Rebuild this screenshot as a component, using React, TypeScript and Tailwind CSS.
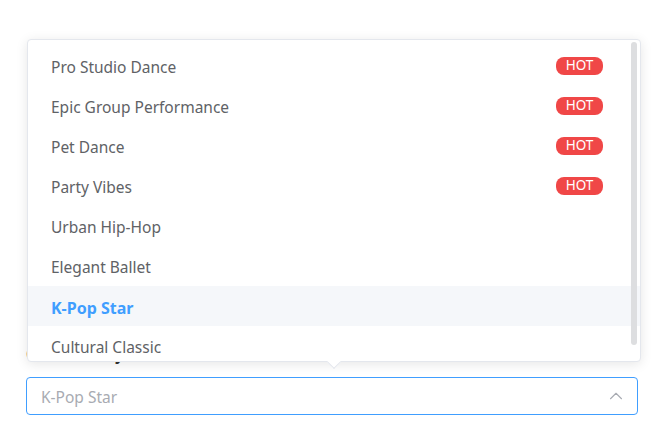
import { ChevronUp } from "lucide-react";

const OPTIONS = [
  { label: "Pro Studio Dance", hot: true },
  { label: "Epic Group Performance", hot: true },
  { label: "Pet Dance", hot: true },
  { label: "Party Vibes", hot: true },
  { label: "Urban Hip-Hop", hot: false },
  { label: "Elegant Ballet", hot: false },
  { label: "K-Pop Star", hot: false },
  { label: "Cultural Classic", hot: false },
  { label: "Street Freestyle", hot: false },
];

const SELECTED = "K-Pop Star";

export default function App() {
  return (
    <div
      className="relative w-[664px] h-[430px] bg-white overflow-hidden"
      style={{ fontFamily: '"Noto Sans", "Open Sans", sans-serif' }}
    >
      {/* form item, label sits under the popper */}
      <div className="flex flex-col pt-[343px] pl-[26px] pr-[26px]">
        <div className="h-[34px] text-[15.5px] font-bold text-[#303133] leading-[22px]">
          Choose a Style
        </div>
        <div className="flex items-center h-[38px] w-[612px] rounded-[4px] border border-[#409eff] bg-white pl-[14px] pr-[10px] pt-[3px]">
          <span className="flex-1 text-[15.5px] text-[#a8abb2]">{SELECTED}</span>
          <ChevronUp className="w-[22px] h-[22px] text-[#a8abb2] -mt-[3px]" strokeWidth={1.2} />
        </div>
      </div>

      {/* dropdown popper */}
      <div className="absolute left-[27px] top-[39px] w-[614px] h-[323px] rounded-[4px] border border-[#e4e7ed] bg-white shadow-[0_2px_12px_0_rgba(0,0,0,0.1)]">
        <div className="h-full overflow-hidden rounded-[4px]">
          <ul className="pt-[6px]">
            {OPTIONS.map((opt) => {
              const active = opt.label === SELECTED;
              return (
                <li
                  key={opt.label}
                  className={
                    active
                      ? "flex items-center h-[40px] pt-[3px] pl-[23px] pr-[37px] bg-[#f5f7fa] text-[16px] font-bold text-[#409eff]"
                      : "flex items-center h-[40px] pt-[3px] pl-[23px] pr-[37px] text-[15.5px] text-[#606266]"
                  }
                >
                  <span className="flex-1">{opt.label}</span>
                  {opt.hot && (
                    <span className="flex items-center justify-center w-[47px] h-[18px] -mt-[3px] rounded-[8px] bg-[#f04747] text-[13.5px] leading-none text-white">
                      HOT
                    </span>
                  )}
                </li>
              );
            })}
          </ul>
        </div>
        {/* scrollbar thumb */}
        <div className="absolute right-[3px] top-[2px] w-[6px] h-[303px] rounded-[3px] bg-[#dddee0]" />
        {/* arrow */}
        <div className="absolute left-[301px] bottom-[-6px] w-[10px] h-[10px] rotate-45 bg-white border-r border-b border-[#e4e7ed]" />
      </div>
    </div>
  );
}
